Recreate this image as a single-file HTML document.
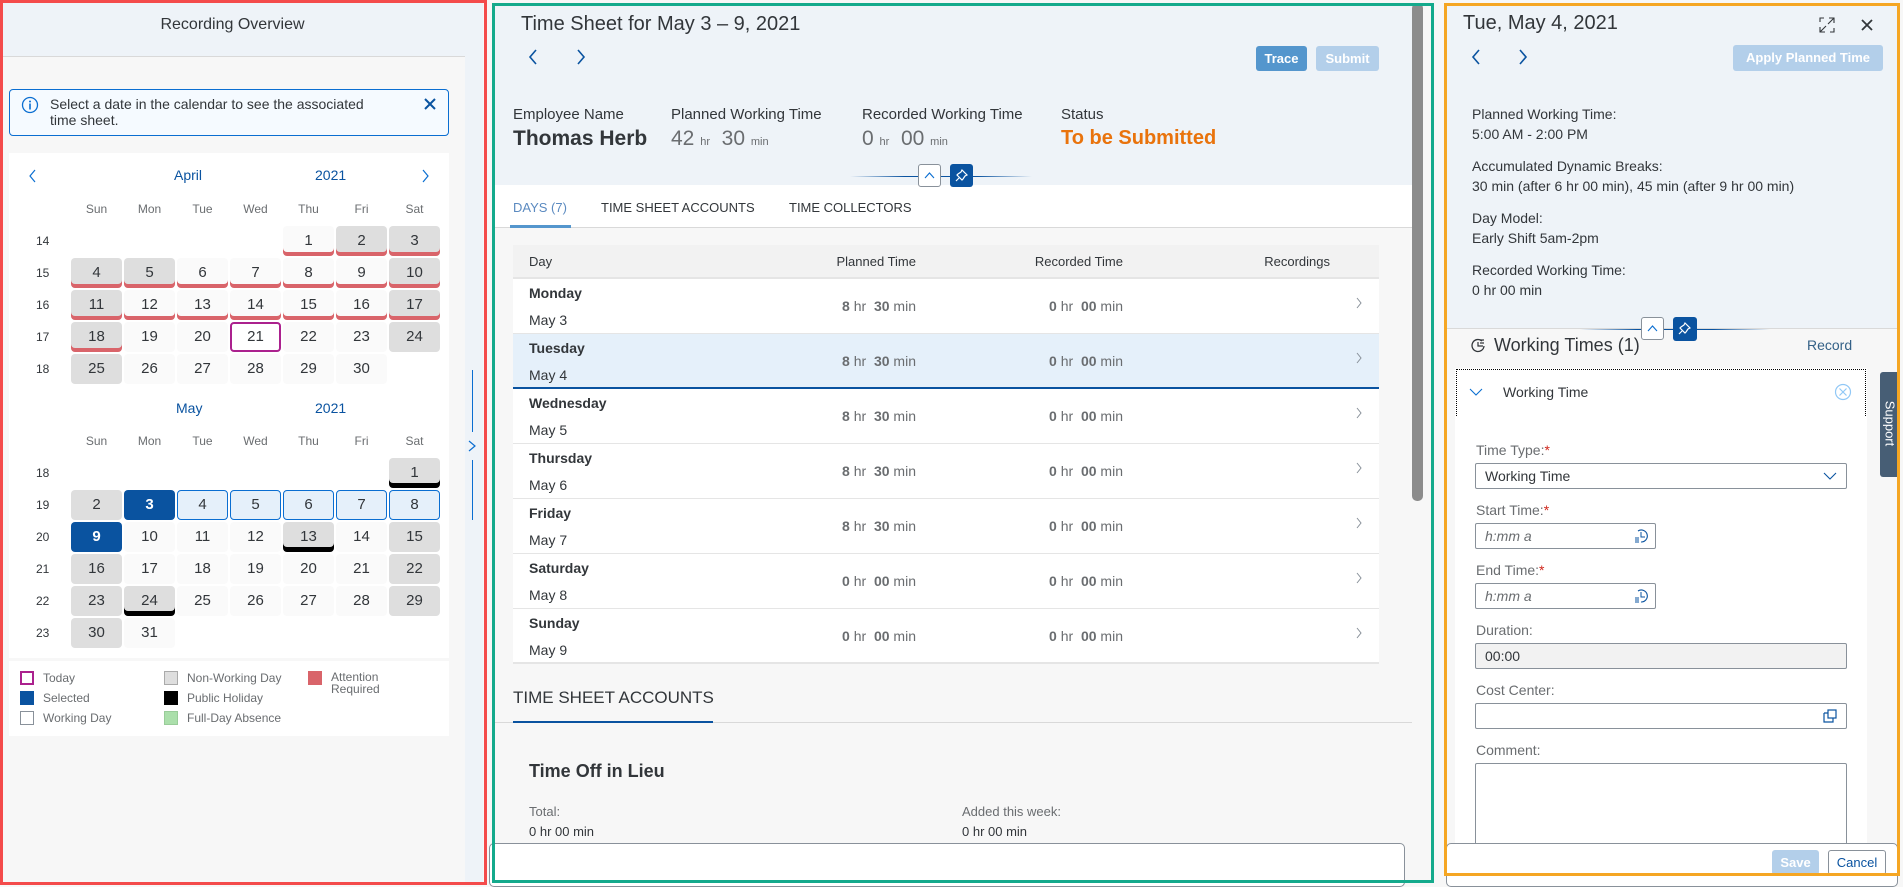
<!DOCTYPE html>
<html><head><meta charset="utf-8">
<style>
*{box-sizing:border-box;margin:0;padding:0}
body{width:1903px;height:885px;overflow:hidden;position:relative;background:#f7f7f7;font-family:"Liberation Sans",sans-serif;color:#32363a}
.a{position:absolute}
.c{position:absolute;width:51px;height:30px;border-radius:4px;background:#fafafa;text-align:center;line-height:30px;font-size:15px;color:#32363a}
.g{background:#dedede}
.r{box-shadow:inset 0 -4px 0 #d9646a}
.k{box-shadow:inset 0 -5px 0 #000}
.s{background:#0a53a0;color:#fff;font-weight:bold}
.b{background:#e5f0fa;border:1px solid #0a6ed1;line-height:28px}
.t{background:#fff;border:2px solid #ab218e;line-height:26px}
.wk{position:absolute;left:36px;font-size:12px;color:#32363a}
.dh{position:absolute;font-size:12px;color:#6a6d70;width:51px;text-align:center}
.lg{position:absolute;width:14px;height:14px}
.lt{position:absolute;font-size:12px;color:#6a6d70}
.lbl{position:absolute;font-size:15px;color:#32363a}
.row{position:absolute;left:513px;width:866px;height:55px;background:#fff;border-bottom:1px solid #e5e5e5}
.row .d{position:absolute;left:16px;top:6px;font-size:14px;font-weight:bold;color:#32363a}
.row .m{position:absolute;left:16px;top:33px;font-size:14px;color:#32363a}
.row .p{position:absolute;right:463px;top:19px;font-size:14px;color:#6a6d70}
.row .q{position:absolute;right:256px;top:19px;font-size:14px;color:#6a6d70}
.row b{color:#6a6d70}
.row .ch{position:absolute;left:842px;top:18px}
.rl{position:absolute;left:1476px;font-size:14px;color:#6a6d70}
.rl i{color:#d0271d;font-style:normal}
.inp{position:absolute;left:1475px;height:26px;border:1px solid #89919a;border-radius:2px;background:#fff;font-size:14px;line-height:24px;padding-left:9px}
.info{position:absolute;left:1472px;font-size:14px;color:#32363a}
</style></head><body>

<!-- LEFT PANEL -->
<div class="a" style="left:0;top:0;width:487px;height:885px;background:#f7f7f7"></div>
<div class="a" style="left:3px;top:3px;width:462px;height:54px;background:#eef3f8;border-bottom:1px solid #d9d9d9"></div>
<div class="a" style="left:0;top:16px;width:465px;text-align:center;font-size:16px;color:#32363a">Recording Overview</div>
<div class="a" style="left:465px;top:3px;width:18px;height:880px;background:#eef3f8"></div>
<div class="a" style="left:472px;top:370px;width:1px;height:62px;background:#0a6ed1"></div>
<div class="a" style="left:472px;top:460px;width:1px;height:60px;background:#0a6ed1"></div>
<svg class="a" style="left:467px;top:440px" width="10" height="12"><path d="M2 1l6 5-6 5" fill="none" stroke="#0a6ed1" stroke-width="1.2"/></svg>

<div class="a" style="left:9px;top:89px;width:440px;height:47px;background:#f5faff;border:1px solid #0a6ed1;border-radius:4px"></div>
<svg class="a" style="left:21px;top:96px" width="18" height="18"><circle cx="9" cy="9" r="7.5" fill="none" stroke="#0a6ed1" stroke-width="1.3"/><circle cx="9" cy="5.5" r="1" fill="#0a6ed1"/><rect x="8.2" y="7.5" width="1.6" height="6" fill="#0a6ed1"/></svg>
<div class="a" style="left:50px;top:96px;width:340px;font-size:14px;line-height:16px;color:#32363a">Select a date in the calendar to see the associated time sheet.</div>
<svg class="a" style="left:423px;top:97px" width="14" height="14"><path d="M2 2l10 10M12 2L2 12" stroke="#0a53a0" stroke-width="2"/></svg>

<div class="a" style="left:9px;top:153px;width:440px;height:505px;background:#fff"></div>
<div class="a" style="left:9px;top:661px;width:440px;height:75px;background:#fff"></div>

<svg class="a" style="left:28px;top:169px" width="10" height="14"><path d="M7 1L2 7l5 6" fill="none" stroke="#0a6ed1" stroke-width="1.2"/></svg>
<svg class="a" style="left:420px;top:169px" width="10" height="14"><path d="M3 1l5 6-5 6" fill="none" stroke="#0a6ed1" stroke-width="1.2"/></svg>
<div class="a" style="left:174px;top:167px;font-size:14px;color:#0a53a0">April</div>
<div class="a" style="left:315px;top:167px;font-size:14px;color:#0a53a0">2021</div>

<div class="dh" style="left:71px;top:202px">Sun</div><div class="dh" style="left:124px;top:202px">Mon</div><div class="dh" style="left:177px;top:202px">Tue</div><div class="dh" style="left:230px;top:202px">Wed</div><div class="dh" style="left:283px;top:202px">Thu</div><div class="dh" style="left:336px;top:202px">Fri</div><div class="dh" style="left:389px;top:202px">Sat</div>
<div class="wk" style="top:234px">14</div><div class="wk" style="top:266px">15</div><div class="wk" style="top:298px">16</div><div class="wk" style="top:330px">17</div><div class="wk" style="top:362px">18</div>

<div class="c r" style="left:283px;top:226px">1</div><div class="c g r" style="left:336px;top:226px">2</div><div class="c g r" style="left:389px;top:226px">3</div>
<div class="c g r" style="left:71px;top:258px">4</div><div class="c g r" style="left:124px;top:258px">5</div><div class="c r" style="left:177px;top:258px">6</div><div class="c r" style="left:230px;top:258px">7</div><div class="c r" style="left:283px;top:258px">8</div><div class="c r" style="left:336px;top:258px">9</div><div class="c g r" style="left:389px;top:258px">10</div>
<div class="c g r" style="left:71px;top:290px">11</div><div class="c r" style="left:124px;top:290px">12</div><div class="c r" style="left:177px;top:290px">13</div><div class="c r" style="left:230px;top:290px">14</div><div class="c r" style="left:283px;top:290px">15</div><div class="c r" style="left:336px;top:290px">16</div><div class="c g r" style="left:389px;top:290px">17</div>
<div class="c g r" style="left:71px;top:322px">18</div><div class="c" style="left:124px;top:322px">19</div><div class="c" style="left:177px;top:322px">20</div><div class="c t" style="left:230px;top:322px">21</div><div class="c" style="left:283px;top:322px">22</div><div class="c" style="left:336px;top:322px">23</div><div class="c g" style="left:389px;top:322px">24</div>
<div class="c g" style="left:71px;top:354px">25</div><div class="c" style="left:124px;top:354px">26</div><div class="c" style="left:177px;top:354px">27</div><div class="c" style="left:230px;top:354px">28</div><div class="c" style="left:283px;top:354px">29</div><div class="c" style="left:336px;top:354px">30</div>

<div class="a" style="left:176px;top:400px;font-size:14px;color:#0a53a0">May</div>
<div class="a" style="left:315px;top:400px;font-size:14px;color:#0a53a0">2021</div>
<div class="dh" style="left:71px;top:434px">Sun</div><div class="dh" style="left:124px;top:434px">Mon</div><div class="dh" style="left:177px;top:434px">Tue</div><div class="dh" style="left:230px;top:434px">Wed</div><div class="dh" style="left:283px;top:434px">Thu</div><div class="dh" style="left:336px;top:434px">Fri</div><div class="dh" style="left:389px;top:434px">Sat</div>
<div class="wk" style="top:466px">18</div><div class="wk" style="top:498px">19</div><div class="wk" style="top:530px">20</div><div class="wk" style="top:562px">21</div><div class="wk" style="top:594px">22</div><div class="wk" style="top:626px">23</div>

<div class="c g k" style="left:389px;top:458px">1</div>
<div class="c g" style="left:71px;top:490px">2</div><div class="c s" style="left:124px;top:490px">3</div><div class="c b" style="left:177px;top:490px">4</div><div class="c b" style="left:230px;top:490px">5</div><div class="c b" style="left:283px;top:490px">6</div><div class="c b" style="left:336px;top:490px">7</div><div class="c b" style="left:389px;top:490px">8</div>
<div class="c s" style="left:71px;top:522px">9</div><div class="c" style="left:124px;top:522px">10</div><div class="c" style="left:177px;top:522px">11</div><div class="c" style="left:230px;top:522px">12</div><div class="c g k" style="left:283px;top:522px">13</div><div class="c" style="left:336px;top:522px">14</div><div class="c g" style="left:389px;top:522px">15</div>
<div class="c g" style="left:71px;top:554px">16</div><div class="c" style="left:124px;top:554px">17</div><div class="c" style="left:177px;top:554px">18</div><div class="c" style="left:230px;top:554px">19</div><div class="c" style="left:283px;top:554px">20</div><div class="c" style="left:336px;top:554px">21</div><div class="c g" style="left:389px;top:554px">22</div>
<div class="c g" style="left:71px;top:586px">23</div><div class="c g k" style="left:124px;top:586px">24</div><div class="c" style="left:177px;top:586px">25</div><div class="c" style="left:230px;top:586px">26</div><div class="c" style="left:283px;top:586px">27</div><div class="c" style="left:336px;top:586px">28</div><div class="c g" style="left:389px;top:586px">29</div>
<div class="c g" style="left:71px;top:618px">30</div><div class="c" style="left:124px;top:618px">31</div>

<div class="lg" style="left:20px;top:671px;border:2px solid #ab218e"></div><div class="lt" style="left:43px;top:671px">Today</div>
<div class="lg" style="left:20px;top:691px;background:#0a53a0"></div><div class="lt" style="left:43px;top:691px">Selected</div>
<div class="lg" style="left:20px;top:711px;border:1px solid #89919a"></div><div class="lt" style="left:43px;top:711px">Working Day</div>
<div class="lg" style="left:164px;top:671px;background:#dedede;border:1px solid #aaa"></div><div class="lt" style="left:187px;top:671px">Non-Working Day</div>
<div class="lg" style="left:164px;top:691px;background:#000"></div><div class="lt" style="left:187px;top:691px">Public Holiday</div>
<div class="lg" style="left:164px;top:711px;background:#abdfab;border:1px solid #9c9"></div><div class="lt" style="left:187px;top:711px">Full-Day Absence</div>
<div class="lg" style="left:308px;top:671px;background:#d9646a"></div><div class="lt" style="left:331px;top:671px;line-height:12px">Attention<br>Required</div>

<!-- MIDDLE PANEL -->
<div class="a" style="left:495px;top:3px;width:917px;height:182px;background:#eef3f8"></div>
<div class="a" style="left:495px;top:185px;width:917px;height:43px;background:#fff;border-bottom:1px solid #d9d9d9"></div>
<div class="a" style="left:521px;top:13px;font-size:20px;color:#32363a">Time Sheet for May 3 – 9, 2021</div>
<svg class="a" style="left:527px;top:49px" width="12" height="16"><path d="M9 1L3 8l6 7" fill="none" stroke="#0a53a0" stroke-width="1.6"/></svg>
<svg class="a" style="left:575px;top:49px" width="12" height="16"><path d="M3 1l6 7-6 7" fill="none" stroke="#0a53a0" stroke-width="1.6"/></svg>
<div class="a" style="left:1256px;top:46px;width:51px;height:25px;background:#5496cd;border-radius:3px;color:#fff;font-size:13px;font-weight:bold;text-align:center;line-height:25px">Trace</div>
<div class="a" style="left:1316px;top:46px;width:63px;height:25px;background:#b3cfea;border-radius:3px;color:#fff;font-size:13px;font-weight:bold;text-align:center;line-height:25px">Submit</div>
<div class="lbl" style="left:513px;top:106px">Employee Name</div>
<div class="lbl" style="left:671px;top:106px">Planned Working Time</div>
<div class="lbl" style="left:862px;top:106px">Recorded Working Time</div>
<div class="lbl" style="left:1061px;top:106px">Status</div>
<div class="a" style="left:513px;top:127px;font-size:21px;font-weight:bold;color:#32363a">Thomas Herb</div>
<div class="a" style="left:671px;top:127px;font-size:21px;color:#6a6d70">42 <span style="font-size:11px">hr</span>&nbsp; 30 <span style="font-size:11px">min</span></div>
<div class="a" style="left:862px;top:127px;font-size:21px;color:#6a6d70">0 <span style="font-size:11px">hr</span>&nbsp; 00 <span style="font-size:11px">min</span></div>
<div class="a" style="left:1061px;top:127px;font-size:20px;font-weight:bold;color:#e9730c">To be Submitted</div>
<div class="a" style="left:850px;top:176px;width:182px;height:1px;background:linear-gradient(90deg,rgba(10,83,160,0),#0a53a0 30%,#0a53a0 70%,rgba(10,83,160,0))"></div>
<div class="a" style="left:918px;top:164px;width:23px;height:23px;background:#fff;border:1px solid #89919a;border-radius:3px"></div>
<svg class="a" style="left:923px;top:170px" width="13" height="10"><path d="M2 8l4.5-5L11 8" fill="none" stroke="#0a6ed1" stroke-width="1.1"/></svg>
<div class="a" style="left:950px;top:164px;width:23px;height:23px;background:#0a53a0;border-radius:3px"></div>
<svg class="a" style="left:954px;top:168px" width="15" height="15"><path d="M8 2l5 5-2 1-2 3-1 1-5-5 1-1 3-2zM5 10l-3 3" fill="none" stroke="#fff" stroke-width="1.2"/></svg>

<div class="a" style="left:513px;top:200px;font-size:13px;color:#5b8ac0">DAYS (7)</div>
<div class="a" style="left:601px;top:200px;font-size:13px;color:#32363a">TIME SHEET ACCOUNTS</div>
<div class="a" style="left:789px;top:200px;font-size:13px;color:#32363a">TIME COLLECTORS</div>
<div class="a" style="left:510px;top:225px;width:61px;height:3px;background:#5496cd"></div>

<div class="a" style="left:513px;top:245px;width:866px;height:34px;background:#f2f2f2;border-bottom:2px solid #e5e5e5"></div>
<div class="a" style="left:529px;top:254px;font-size:13px;color:#32363a">Day</div>
<div class="a" style="left:816px;top:254px;width:100px;text-align:right;font-size:13px;color:#32363a">Planned Time</div>
<div class="a" style="left:1003px;top:254px;width:120px;text-align:right;font-size:13px;color:#32363a">Recorded Time</div>
<div class="a" style="left:1210px;top:254px;width:120px;text-align:right;font-size:13px;color:#32363a">Recordings</div>

<div class="row" style="top:279px"><div class="d">Monday</div><div class="m">May 3</div><div class="p"><b>8</b> hr &nbsp;<b>30</b> min</div><div class="q"><b>0</b> hr &nbsp;<b>00</b> min</div><svg class="ch" width="8" height="12"><path d="M2 1l4 5-4 5" fill="none" stroke="#89919a"/></svg></div>
<div class="row" style="top:334px;background:#e5f0fa;border-bottom:2px solid #0a53a0"><div class="d">Tuesday</div><div class="m">May 4</div><div class="p"><b>8</b> hr &nbsp;<b>30</b> min</div><div class="q"><b>0</b> hr &nbsp;<b>00</b> min</div><svg class="ch" width="8" height="12"><path d="M2 1l4 5-4 5" fill="none" stroke="#89919a"/></svg></div>
<div class="row" style="top:389px"><div class="d">Wednesday</div><div class="m">May 5</div><div class="p"><b>8</b> hr &nbsp;<b>30</b> min</div><div class="q"><b>0</b> hr &nbsp;<b>00</b> min</div><svg class="ch" width="8" height="12"><path d="M2 1l4 5-4 5" fill="none" stroke="#89919a"/></svg></div>
<div class="row" style="top:444px"><div class="d">Thursday</div><div class="m">May 6</div><div class="p"><b>8</b> hr &nbsp;<b>30</b> min</div><div class="q"><b>0</b> hr &nbsp;<b>00</b> min</div><svg class="ch" width="8" height="12"><path d="M2 1l4 5-4 5" fill="none" stroke="#89919a"/></svg></div>
<div class="row" style="top:499px"><div class="d">Friday</div><div class="m">May 7</div><div class="p"><b>8</b> hr &nbsp;<b>30</b> min</div><div class="q"><b>0</b> hr &nbsp;<b>00</b> min</div><svg class="ch" width="8" height="12"><path d="M2 1l4 5-4 5" fill="none" stroke="#89919a"/></svg></div>
<div class="row" style="top:554px"><div class="d">Saturday</div><div class="m">May 8</div><div class="p"><b>0</b> hr &nbsp;<b>00</b> min</div><div class="q"><b>0</b> hr &nbsp;<b>00</b> min</div><svg class="ch" width="8" height="12"><path d="M2 1l4 5-4 5" fill="none" stroke="#89919a"/></svg></div>
<div class="row" style="top:609px;border-bottom:2px solid #e5e5e5"><div class="d">Sunday</div><div class="m">May 9</div><div class="p"><b>0</b> hr &nbsp;<b>00</b> min</div><div class="q"><b>0</b> hr &nbsp;<b>00</b> min</div><svg class="ch" width="8" height="12"><path d="M2 1l4 5-4 5" fill="none" stroke="#89919a"/></svg></div>

<div class="a" style="left:513px;top:688px;font-size:17px;color:#32363a">TIME SHEET ACCOUNTS</div>
<div class="a" style="left:495px;top:722px;width:917px;height:1px;background:#d9d9d9"></div>
<div class="a" style="left:513px;top:721px;width:200px;height:2px;background:#0a53a0"></div>
<div class="a" style="left:529px;top:761px;font-size:18px;font-weight:bold;color:#32363a">Time Off in Lieu</div>
<div class="a" style="left:529px;top:804px;font-size:13px;color:#6a6d70">Total:</div>
<div class="a" style="left:529px;top:824px;font-size:13px;color:#32363a">0 hr 00 min</div>
<div class="a" style="left:962px;top:804px;font-size:13px;color:#6a6d70">Added this week:</div>
<div class="a" style="left:962px;top:824px;font-size:13px;color:#32363a">0 hr 00 min</div>
<div class="a" style="left:489px;top:843px;width:916px;height:44px;background:#fff;border:1px solid #89919a;border-radius:5px"></div>

<div class="a" style="left:1412px;top:3px;width:11px;height:498px;background:#8c8c8c;border-radius:5px"></div>

<!-- RIGHT PANEL -->
<div class="a" style="left:1447px;top:3px;width:450px;height:326px;background:#eef3f8;border-bottom:1px solid #d9d9d9"></div>
<div class="a" style="left:1463px;top:12px;font-size:20px;color:#32363a">Tue, May 4, 2021</div>
<svg class="a" style="left:1818px;top:16px" width="18" height="18"><path d="M11 2h5v5M16 2l-6 6M7 16H2v-5M2 16l6-6M2 6V2h4M16 12v4h-4" fill="none" stroke="#32363a" stroke-width="1.1"/></svg>
<svg class="a" style="left:1860px;top:18px" width="14" height="14"><path d="M2 2l10 10M12 2L2 12" stroke="#32363a" stroke-width="1.8"/></svg>
<svg class="a" style="left:1470px;top:49px" width="12" height="16"><path d="M9 1L3 8l6 7" fill="none" stroke="#0a53a0" stroke-width="1.6"/></svg>
<svg class="a" style="left:1517px;top:49px" width="12" height="16"><path d="M3 1l6 7-6 7" fill="none" stroke="#0a53a0" stroke-width="1.6"/></svg>
<div class="a" style="left:1733px;top:45px;width:150px;height:26px;background:#b3cfea;border-radius:3px;color:#fff;font-size:13px;font-weight:bold;text-align:center;line-height:26px">Apply Planned Time</div>
<div class="info" style="top:106px">Planned Working Time:</div>
<div class="info" style="top:126px">5:00 AM - 2:00 PM</div>
<div class="info" style="top:158px">Accumulated Dynamic Breaks:</div>
<div class="info" style="top:178px">30 min (after 6 hr 00 min), 45 min (after 9 hr 00 min)</div>
<div class="info" style="top:210px">Day Model:</div>
<div class="info" style="top:230px">Early Shift 5am-2pm</div>
<div class="info" style="top:262px">Recorded Working Time:</div>
<div class="info" style="top:282px">0 hr 00 min</div>
<div class="a" style="left:1580px;top:329px;width:190px;height:1px;background:linear-gradient(90deg,rgba(10,83,160,0),#0a53a0 30%,#0a53a0 70%,rgba(10,83,160,0))"></div>
<div class="a" style="left:1641px;top:317px;width:23px;height:23px;background:#fff;border:1px solid #89919a;border-radius:3px"></div>
<svg class="a" style="left:1646px;top:323px" width="13" height="10"><path d="M2 8l4.5-5L11 8" fill="none" stroke="#0a6ed1" stroke-width="1.1"/></svg>
<div class="a" style="left:1673px;top:317px;width:24px;height:24px;background:#0a53a0;border-radius:3px"></div>
<svg class="a" style="left:1677px;top:321px" width="15" height="15"><path d="M8 2l5 5-2 1-2 3-1 1-5-5 1-1 3-2zM5 10l-3 3" fill="none" stroke="#fff" stroke-width="1.2"/></svg>

<svg class="a" style="left:1470px;top:337px" width="16" height="16"><path d="M12 4A6 6 0 1 0 14 9" fill="none" stroke="#32363a" stroke-width="1.3"/><path d="M8 5v4h5M10 3h4M10 6h4" stroke="#32363a" stroke-width="1.2" fill="none"/></svg>
<div class="a" style="left:1494px;top:335px;font-size:18px;color:#32363a">Working Times (1)</div>
<div class="a" style="left:1807px;top:337px;font-size:14px;color:#346187">Record</div>

<div class="a" style="left:1455px;top:368px;width:412px;height:510px;background:#fff"></div>
<div class="a" style="left:1456px;top:369px;width:410px;height:47px;border:1px dotted #000;border-bottom:none"></div>
<svg class="a" style="left:1469px;top:387px" width="14" height="10"><path d="M1 2l6 6 6-6" fill="none" stroke="#0a6ed1" stroke-width="1.1"/></svg>
<div class="a" style="left:1503px;top:384px;font-size:14px;color:#32363a">Working Time</div>
<svg class="a" style="left:1834px;top:383px" width="18" height="18"><circle cx="9" cy="9" r="7.5" fill="none" stroke="#91c8f6" stroke-width="1.2"/><path d="M5.5 5.5l7 7M12.5 5.5l-7 7" stroke="#91c8f6" stroke-width="1.2"/></svg>
<div class="a" style="left:1880px;top:372px;width:20px;height:105px;background:#475e75;border-radius:3px 0 0 3px"></div>
<div class="a" style="left:1863px;top:416px;width:54px;text-align:center;transform:rotate(90deg);color:#fff;font-size:13px">Support</div>

<div class="rl" style="top:442px">Time Type:<i>*</i></div>
<div class="inp" style="top:463px;width:372px">Working Time</div>
<svg class="a" style="left:1823px;top:472px" width="14" height="9"><path d="M1 1l6 6 6-6" fill="none" stroke="#0a53a0" stroke-width="1.1"/></svg>
<div class="rl" style="top:502px">Start Time:<i>*</i></div>
<div class="inp" style="top:523px;width:181px;color:#6a6d70;font-style:italic">h:mm a</div>
<svg class="a" style="left:1633px;top:528px" width="16" height="16"><path d="M5 3A6 6 0 1 1 8 14" fill="none" stroke="#0a53a0" stroke-width="1.1"/><path d="M8 4v5h4M2 10h4M2 12h4M2 14h4" stroke="#0a53a0" stroke-width="1" fill="none"/></svg>
<div class="rl" style="top:562px">End Time:<i>*</i></div>
<div class="inp" style="top:583px;width:181px;color:#6a6d70;font-style:italic">h:mm a</div>
<svg class="a" style="left:1633px;top:588px" width="16" height="16"><path d="M5 3A6 6 0 1 1 8 14" fill="none" stroke="#0a53a0" stroke-width="1.1"/><path d="M8 4v5h4M2 10h4M2 12h4M2 14h4" stroke="#0a53a0" stroke-width="1" fill="none"/></svg>
<div class="rl" style="top:622px">Duration:</div>
<div class="inp" style="top:643px;width:372px;background:#f2f2f2">00:00</div>
<div class="rl" style="top:682px">Cost Center:</div>
<div class="inp" style="top:703px;width:372px"></div>
<svg class="a" style="left:1823px;top:709px" width="14" height="14"><path d="M1 4h4M1 4v9h9V9" fill="none" stroke="#0a53a0" stroke-width="1.2"/><rect x="5" y="1" width="8" height="8" fill="none" stroke="#0a53a0" stroke-width="1.2"/></svg>
<div class="rl" style="top:742px">Comment:</div>
<div class="inp" style="top:763px;width:372px;height:100px"></div>

<div class="a" style="left:1446px;top:843px;width:452px;height:44px;background:#fff;border:1px solid #89919a;border-radius:5px"></div>
<div class="a" style="left:1772px;top:850px;width:47px;height:25px;background:#b3cfea;border-radius:3px;color:#fff;font-size:13px;font-weight:bold;text-align:center;line-height:25px">Save</div>
<div class="a" style="left:1828px;top:850px;width:58px;height:25px;background:#fff;border:1px solid #89919a;border-radius:3px;color:#0a53a0;font-size:13px;text-align:center;line-height:23px">Cancel</div>

<!-- Outlines -->
<div class="a" style="left:0;top:0;width:487px;height:885px;border:3px solid #f44b4b"></div>
<div class="a" style="left:492px;top:3px;width:942px;height:880px;border:3px solid #14aa8c"></div>
<div class="a" style="left:1444px;top:3px;width:456px;height:873px;border:3px solid #f5a623"></div>
</body></html>
